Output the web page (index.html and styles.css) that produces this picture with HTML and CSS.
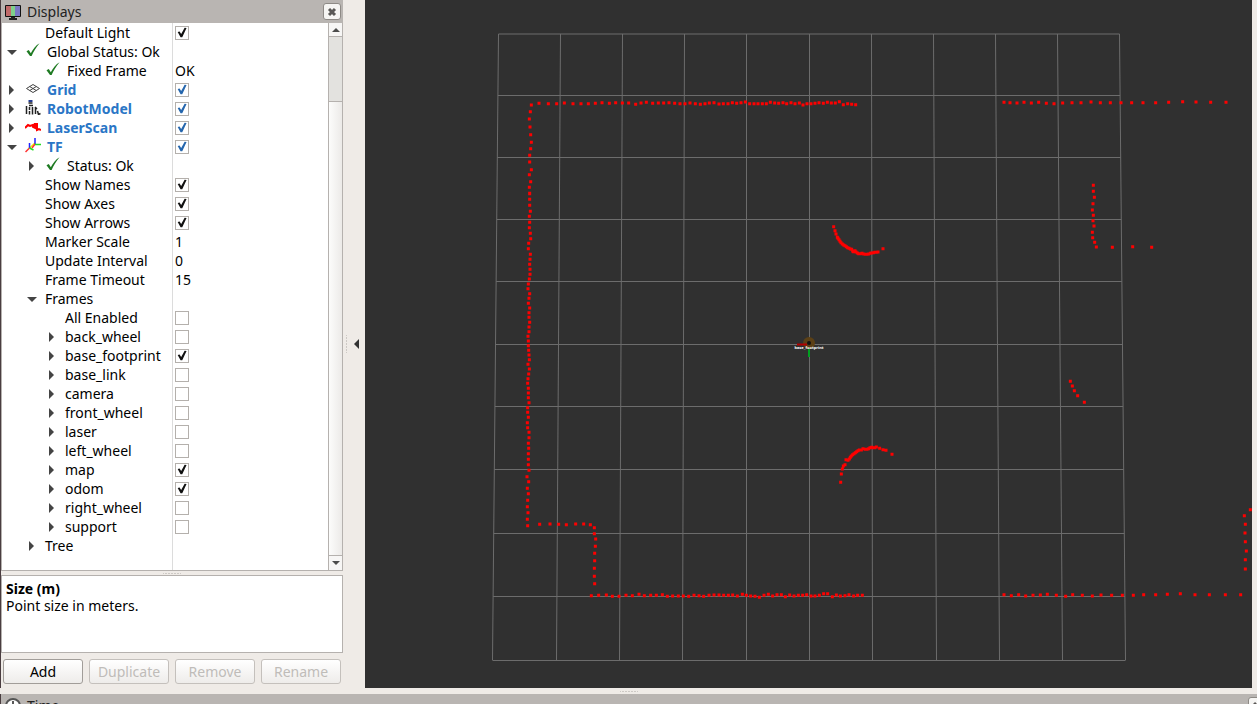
FILE: index.html
```html
<!DOCTYPE html>
<html lang="en">
<head>
    <meta charset="utf-8"/>
    <title>RViz</title>
    <link rel="stylesheet" href="styles.css">
</head>
<body>
<svg class="defs" aria-hidden="true">
    <symbol id="ok" viewBox="0 0 16 16"><path d="M1.500 9.200l2.300-1.200 2 3.200C8 7 10.800 3.200 14.600 1.200 11.200 5 8.500 9.500 6.600 14H5z" fill="#1e7a22"/></symbol>
    <symbol id="close" viewBox="0 0 10 10"><path d="M2 2l6 6M8 2l-6 6" stroke="#5a5856" stroke-width="3"/></symbol>
</svg>
<div class="main">
    <div class="displays">
        <div class="dock_title">
            <svg class="dock_icon" viewBox="0 0 18 18">
                <rect x="1" y="2" width="16" height="12" rx="1" fill="#111"/>
                <rect x="2" y="3" width="5" height="10" fill="#c06a6a"/>
                <rect x="7" y="3" width="4" height="10" fill="#7fd08a"/>
                <rect x="11" y="3" width="5" height="10" fill="#7a78c4"/>
                <path d="M7 14h4v1h2v2H5v-2h2z" fill="#222"/>
            </svg>
            <span>Displays</span>
            <button class="dock_close" aria-label="Close"><svg><use href="#close"/></svg></button>
        </div>
        <div class="tree">
            <table class="props">
                <tr><td class="lv1"><label for="light">Default Light</label></td><td><input type="checkbox" id="light" checked></td></tr>
                <tr><td class="lv0 open"><svg class="icon"><use href="#ok"/></svg>Global Status: Ok</td><td></td></tr>
                <tr><td class="lv1"><svg class="icon"><use href="#ok"/></svg>Fixed Frame</td><td>OK</td></tr>
                <tr><td class="lv0 shut display"><svg class="icon" viewBox="0 0 16 16"><path d="M1.500 8.500L8 4.500l6.500 4L8 12.500zM4.700 6.500l6.500 4M11.300 6.500l-6.500 4" fill="none" stroke="#444"/></svg><label for="grid">Grid</label></td><td><input class="blue" type="checkbox" id="grid" checked></td></tr>
                <tr><td class="lv0 shut display"><svg class="icon" viewBox="0 0 16 16"><path d="M3.500 2h4" stroke="#223a90" stroke-width="2"/><path d="M3.500 4h4M1.500 7v8M4 6.500h4M4.500 8v3M4.500 12v3.500M7.500 8v7.500M10.500 8v7M10 8l2 2M12.500 12l1 3.500 2-1" fill="none" stroke="#222" stroke-width="1.500"/></svg><label for="robot">RobotModel</label></td><td><input class="blue" type="checkbox" id="robot" checked></td></tr>
                <tr><td class="lv0 shut display"><svg class="icon" viewBox="0 0 16 16"><path d="M0 10l3-3 2 1 3-1v2l2 1V6h2v6l2-1 2 1" fill="none" stroke="#f00" stroke-width="2"/></svg><label for="laser_scan">LaserScan</label></td><td><input class="blue" type="checkbox" id="laser_scan" checked></td></tr>
                <tr><td class="lv0 open display"><svg class="icon" viewBox="0 0 16 16"><path d="M4.500 11l5.500-5" stroke="#ee0" stroke-width="1.500"/><path d="M4.500 11V6M10 7V1" stroke="#22f" stroke-width="1.500"/><path d="M4.500 11l-4 4M10 7l-3 4" stroke="#f33" stroke-width="1.500"/><path d="M4.500 11l4 2M10 7.500h6" stroke="#2d2" stroke-width="1.500"/></svg><label for="tf">TF</label></td><td><input class="blue" type="checkbox" id="tf" checked></td></tr>
                <tr><td class="lv1 shut"><svg class="icon"><use href="#ok"/></svg>Status: Ok</td><td></td></tr>
                <tr><td class="lv1"><label for="names">Show Names</label></td><td><input type="checkbox" id="names" checked></td></tr>
                <tr><td class="lv1"><label for="axes">Show Axes</label></td><td><input type="checkbox" id="axes" checked></td></tr>
                <tr><td class="lv1"><label for="arrows">Show Arrows</label></td><td><input type="checkbox" id="arrows" checked></td></tr>
                <tr><td class="lv1">Marker Scale</td><td>1</td></tr>
                <tr><td class="lv1">Update Interval</td><td>0</td></tr>
                <tr><td class="lv1">Frame Timeout</td><td>15</td></tr>
                <tr><td class="lv1 open">Frames</td><td></td></tr>
                <tr><td class="lv2"><label for="all">All Enabled</label></td><td><input type="checkbox" id="all"></td></tr>
                <tr><td class="lv2 shut"><label for="back_wheel">back_wheel</label></td><td><input type="checkbox" id="back_wheel"></td></tr>
                <tr><td class="lv2 shut"><label for="base_footprint">base_footprint</label></td><td><input type="checkbox" id="base_footprint" checked></td></tr>
                <tr><td class="lv2 shut"><label for="base_link">base_link</label></td><td><input type="checkbox" id="base_link"></td></tr>
                <tr><td class="lv2 shut"><label for="camera">camera</label></td><td><input type="checkbox" id="camera"></td></tr>
                <tr><td class="lv2 shut"><label for="front_wheel">front_wheel</label></td><td><input type="checkbox" id="front_wheel"></td></tr>
                <tr><td class="lv2 shut"><label for="laser">laser</label></td><td><input type="checkbox" id="laser"></td></tr>
                <tr><td class="lv2 shut"><label for="left_wheel">left_wheel</label></td><td><input type="checkbox" id="left_wheel"></td></tr>
                <tr><td class="lv2 shut"><label for="map">map</label></td><td><input type="checkbox" id="map" checked></td></tr>
                <tr><td class="lv2 shut"><label for="odom">odom</label></td><td><input type="checkbox" id="odom" checked></td></tr>
                <tr><td class="lv2 shut"><label for="right_wheel">right_wheel</label></td><td><input type="checkbox" id="right_wheel"></td></tr>
                <tr><td class="lv2 shut"><label for="support">support</label></td><td><input type="checkbox" id="support"></td></tr>
                <tr><td class="lv1 shut">Tree</td><td></td></tr>
                <tr class="rest"><td></td><td></td></tr>
            </table>
            <div class="scroll">
                <button aria-label="Scroll up"><svg viewBox="0 0 8 4"><path d="M0 4l4-4 4 4z"/></svg></button>
                <div class="thumb"></div>
                <button aria-label="Scroll down"><svg viewBox="0 0 8 4"><path d="M0 0l4 4 4-4z"/></svg></button>
            </div>
        </div>
        <div class="handle"></div>
        <div class="help"><b>Size (m)</b><br>Point size in meters.</div>
        <div class="buttons">
            <button>Add</button>
            <button disabled>Duplicate</button>
            <button disabled>Remove</button>
            <button disabled>Rename</button>
        </div>
    </div>
    <div class="gutter">
        <div class="handle_v"></div>
        <button aria-label="Hide left panel"><svg viewBox="0 0 5 10"><path d="M5 0v10L0 5z"/></svg></button>
    </div>
    <div class="view">
        <svg class="scene" viewBox="365 0 887 688">
            <path id="grid_lines"/>
            <circle cx="809" cy="343" r="6" fill="#5c4015"/>
            <circle cx="809" cy="343" r="2" fill="#111"/>
            <path d="M797 344.500h10" stroke="#b00000" stroke-width="2"/>
            <path d="M809 349v8" stroke="#00a020" stroke-width="2"/>
            <text x="809" y="349">base_footprint</text>
            <path id="scan"/>
        </svg>
    </div>
</div>
<div class="handle"></div>
<div class="time">
    <div class="dock_title">
        <svg class="dock_icon" viewBox="0 0 18 18"><circle cx="9" cy="9" r="7" fill="#fff" stroke="#555" stroke-width="2"/><path d="M9 4v5h3" fill="none" stroke="#222" stroke-width="1.500"/></svg>
        <span>Time</span>
        <button class="dock_close" aria-label="Close"><svg><use href="#close"/></svg></button>
    </div>
</div>
<script type="text/javascript" src="scene.js"></script>
</body>
</html>
```
FILE: styles.css
```css
*{margin:0;padding:0;box-sizing:border-box;}
body{
    display: flex;
    flex-direction: column;
    height: 100vh;
    overflow: hidden;
    background: #efebe7;
    color: #000;
    font-family: "Noto Sans", "Open Sans", sans-serif;
    font-size: 14px;
    line-height: 19px;
}
button,input{font: inherit;}
.defs{display: none;}
.main{
    flex: 1;
    min-height: 0;
    display: flex;
}
.displays{
    width: 343px;
    border-left: 1px solid #4a3d40;
    display: flex;
    flex-direction: column;
}
.dock_title{
    display: flex;
    align-items: center;
    gap: 5px;
    height: 23px;
    padding: 0 2px 0 3px;
    background: #b9b5b2;
    color: #222;
}
.dock_icon{
    width: 18px;
    height: 18px;
}
.dock_close{
    width: 18px;
    height: 17px;
    margin-left: auto;
    display: flex;
    align-items: center;
    justify-content: center;
    border: 1px solid #8e8a86;
    border-radius: 3px;
    background: #f6f5f3;
}
.dock_close svg{
    width: 10px;
    height: 10px;
}
.tree{
    flex: 1;
    min-height: 0;
    display: flex;
    background: #fff;
    border: 1px solid #b5b1ae;
    border-top: 0;
}
.props{
    flex: 1;
    table-layout: fixed;
    border-collapse: separate;
    border-spacing: 0;
}
.props td{
    height: 19px;
    white-space: nowrap;
    line-height: 19px;
}
.props td:first-child{
    width: 171px;
    border-right: 1px solid #dcdcdc;
}
.props td:last-child{padding-left: 2px;}
.props .rest td{height: auto;}
.props .lv0{padding-left: 23px;}
.props .lv1{padding-left: 43px;}
.props .lv2{padding-left: 63px;}
.open::before,.shut::before{
    content: "";
    display: inline-block;
    border: solid transparent;
    vertical-align: middle;
}
.open::before{
    border-width: 5px 5px 0;
    border-top-color: #444;
    margin: 0 8px 2px -18px;
}
.shut::before{
    border-width: 5px 0 5px 5px;
    border-left-color: #444;
    margin: 0 11px 2px -16px;
}
.icon{
    width: 16px;
    height: 16px;
    margin-right: 6px;
    vertical-align: top;
}
.display{
    color: #2a76c6;
    font-weight: bold;
}
.props input{
    display: block;
    appearance: none;
    width: 14px;
    height: 14px;
    border: 1px solid #b4b0ac;
    background: #fff;
}
.props input:checked::before{
    content: "";
    display: block;
    width: 12px;
    height: 12px;
    background: #111;
    clip-path: polygon(14% 46%, 30% 42%, 43% 62%, 72% 10%, 88% 12%, 52% 90%, 38% 90%);
}
.props input.blue:checked::before{background: #2566ad;}
.scroll{
    width: 14px;
    display: flex;
    flex-direction: column;
    border-left: 1px solid #b5b1ae;
    background: #e3e2df;
}
.scroll button{
    height: 14px;
    border: 0;
    border-bottom: 1px solid #b5b1ae;
    background: #f7f6f5;
    display: flex;
    align-items: center;
    justify-content: center;
}
.scroll button:last-child{border-bottom: 0;}
.scroll svg{
    width: 8px;
    height: 4px;
    fill: #4c4c4c;
}
.thumb{
    flex: 1;
    margin-top: 64px;
    border: solid #b5b1ae;
    border-width: 1px 0;
    background: linear-gradient(to right, #fcfcfb, #eceae8);
}
.handle{
    flex: none;
    height: 4px;
    background: radial-gradient(circle, #aaa6a2 1px, transparent 1px) center / 3px 3px no-repeat;
}
.displays .handle,body > .handle{
    width: 18px;
    align-self: center;
    background-repeat: repeat-x;
}
body > .handle{height: 6px;}
.help{
    height: 78px;
    padding: 4px;
    background: #fff;
    border: 1px solid #b5b1ae;
    line-height: 17px;
}
.buttons{
    display: flex;
    gap: 6px;
    padding: 6px 2px 10px;
}
.buttons button{
    flex: 1;
    height: 25px;
    border: 1px solid #a19d99;
    border-radius: 3px;
    background: linear-gradient(#fff, #eeecea);
    color: #000;
}
.buttons button:disabled{
    border-color: #c4c0bc;
    color: #bfbcb9;
}
.buttons{padding-bottom: 4px;}
.gutter{
    width: 22px;
    display: flex;
    align-items: center;
    gap: 6px;
    padding-left: 2px;
}
.handle_v{
    width: 3px;
    height: 18px;
    background: radial-gradient(circle, #aaa6a2 1px, transparent 1px) center / 3px 3px repeat-y;
}
.gutter button{
    display: flex;
    border: 0;
    background: none;
}
.gutter svg{
    width: 5px;
    height: 10px;
    fill: #333;
}
.view{
    flex: 1;
    min-width: 0;
    margin-right: 5px;
    background: #303030;
}
.scene{
    display: block;
    width: 100%;
    height: 100%;
}
.scene text{
    fill: #fff;
    font-size: 4px;
    font-weight: bold;
    text-anchor: middle;
}
#grid_lines{
    fill: none;
    stroke: #6c6c6c;
}
#scan{
    fill: none;
    stroke: #f00;
    stroke-width: 3px;
}
.time{
    height: 10px;
    overflow: hidden;
    border-left: 1px solid #4a3d40;
}
.time .dock_title{margin-right: -11px;}
```
FILE: scene.js
```javascript
// grid: ends of the lines, top/bottom and left/right
var top_x = [498, 560, 622, 684, 746, 809, 871, 933, 995, 1057, 1119];
var bottom_x = [492, 556, 619, 682, 746, 809, 872, 936, 999, 1062, 1125];
var rows_y = [34, 95, 157, 219, 281, 344, 406, 469, 533, 596, 660];
var d = '';
for (var i = 0; i < 11; i++) {
    var k = (rows_y[i] - 34) / 626;
    d += 'M' + (top_x[i] + 0.5) + ' 34L' + (bottom_x[i] + 0.5) + ' 660';
    d += 'M' + (498.5 - 6 * k) + ' ' + (rows_y[i] + (i ? 0.5 : 0)) + 'H' + (1119.5 + 6 * k);
}
document.getElementById('grid_lines').setAttribute('d', d);

// scan points, in thirds of a unit from each origin
var scans = [
    // top wall
    [490, 20, '124,255 147,250 175,251 200,251 223,249 249,251 273,251 295,251 316,250 336,248 358,250 377,248 397,249 416,249 437,253 453,249 469,247 488,250 505,249 521,249 537,248 554,250 570,251 585,251 600,249 616,251 631,253 645,251 658,249 672,248 687,252 700,251 714,251 727,248 740,250 753,248 766,246 779,251 792,251 804,251 817,251 829,251 841,247 854,249 866,250 879,248 890,251 903,248 915,251 928,249 939,255 951,251 963,251 975,250 987,248 1000,250 1012,247 1024,249 1036,249 1048,245 1060,254 1073,251 1085,253 1097,254'],
    // left wall
    [490, 20, '121,275 118,297 120,321 122,344 124,367 122,386 119,406 119,426 124,449 118,464 122,485 118,502 119,520'],
    [500, 190, '89,11 89,28 89,46 91,64 88,79 89,97 88,113 91,130 92,146 86,160 85,176 91,193 90,208 89,223 90,238 90,253 88,267 85,282 84,296 89,311 87,325 85,340 89,354 87,368 87,382 89,397 87,411 87,425 84,439 85,453 85,467 86,481 87,495 88,509 84,523 88,537 86,552 84,566 83,580 85,595 85,609 85,623 87,638 83,653 83,667 85,682 82,698 83,713'],
    [490, 430, '117,7 117,23 115,40 116,55 115,71 115,88 115,104 117,121 111,140 116,155 112,175 115,191 113,211 112,230 114,248 112,268 113,287 149,283 180,282 206,283 229,284 257,282 281,282 301,284 313,293 313,311 317,327 316,349 314,370 314,392 313,415 313,439 314,461'],
    // bottom wall
    [490, 430, '304,497 326,496 349,495 367,499 387,499 408,496 427,497 447,493 463,497 482,496 499,496 517,494 532,499 548,498 565,498 580,498 596,499 612,496 627,497 641,499 657,496 672,495 687,495 701,496 715,496 728,495 742,498 757,493 769,496 782,498 795,499 808,502 822,496 835,493 848,498 861,494 874,494 886,500 899,495 912,498 925,496 938,496 950,494 963,498 975,498 988,496 1001,491 1013,491 1027,500 1039,495 1051,498 1065,497 1077,494 1091,498 1103,496 1117,496'],
    // round obstacles
    [820, 210, '41,50 45,62 48,72 52,82 54,85 57,89 60,94 63,98 67,102 71,105 75,107 79,110 83,113 87,115 91,117 95,118 98,123 100,125 105,122 108,126 112,129 116,131 121,131 126,130 131,132 136,133 141,133 146,132 151,130 155,129 160,128 165,127 169,127 174,126 189,116'],
    [490, 430, '1052,157 1054,132 1057,117 1060,108 1065,104 1068,89 1074,91 1078,87 1081,82 1084,78 1088,74 1092,71 1096,68 1100,65 1104,62 1108,60 1114,60 1119,56 1126,58 1131,58 1136,56 1140,53 1145,52 1150,53 1154,53 1159,51 1169,55 1179,59 1188,61 1206,73'],
    // right side
    [1000, 80, '12,67 30,68 51,69 72,67 94,69 116,67 139,70 162,71 188,69 216,68 243,68 273,66 301,68 331,68 363,68 395,68 429,68 467,68 506,67 548,65 588,66 632,67 678,67'],
    [1040, 80, '160,316 160,334 163,352 159,371 157,390 160,406 159,422 162,438 157,457 158,473 164,487 169,501 217,502 278,500 335,502'],
    [1040, 370, '91,34 97,48 103,62 113,77 133,97 631,419 613,437 616,463 615,489 616,515 619,543 616,569 616,597'],
    [1000, 370, '12,674 34,677 56,674 77,678 99,676 121,675 142,673 169,676 197,679 218,674 247,676 277,678 303,675 335,676 367,676 400,676 431,674 467,674 502,673 541,671 585,674 628,674 676,674 722,674']
];
d = '';
scans.forEach(function (s) {
    s[2].split(' ').forEach(function (p) {
        var c = p.split(',');
        d += 'M' + (s[0] + c[0] / 3 - 1.5) + ' ' + (s[1] + c[1] / 3) + 'h3';
    });
});
document.getElementById('scan').setAttribute('d', d);
```
